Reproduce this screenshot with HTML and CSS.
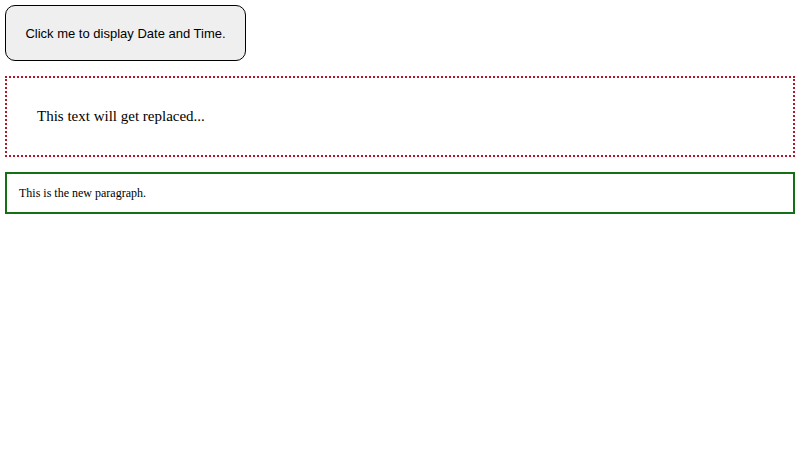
FILE: index.html
```html
<!DOCTYPE html>
<html>
<head>
<meta charset="utf-8">
<link rel="stylesheet" href="styles.css">
</head>
<body>
<button class="btn">Click me to display Date and Time.</button>
<div class="replace">This text will get replaced...</div>
<div class="newpara">This is the new paragraph.</div>
</body>
</html>
```
FILE: styles.css
```css
body {
  margin: 5px;
  font-family: "Liberation Serif", serif;
  color: #000;
}
.btn {
  display: block;
  box-sizing: border-box;
  width: 241px;
  height: 56px;
  padding: 0;
  white-space: nowrap;
  background: #efefef;
  border: 1px solid #000;
  border-radius: 10px;
  font-family: "Liberation Sans", sans-serif;
  font-size: 13px;
  color: #000;
}
.replace {
  margin-top: 15px;
  box-sizing: border-box;
  height: 81px;
  padding: 0 30px;
  display: flex;
  align-items: center;
  border: 2px dotted #b0182a;
  font-size: 15px;
}
.newpara {
  margin-top: 15px;
  box-sizing: border-box;
  height: 42px;
  padding: 0 12px;
  display: flex;
  align-items: center;
  border: 2px solid #157015;
  font-size: 12px;
}
```
